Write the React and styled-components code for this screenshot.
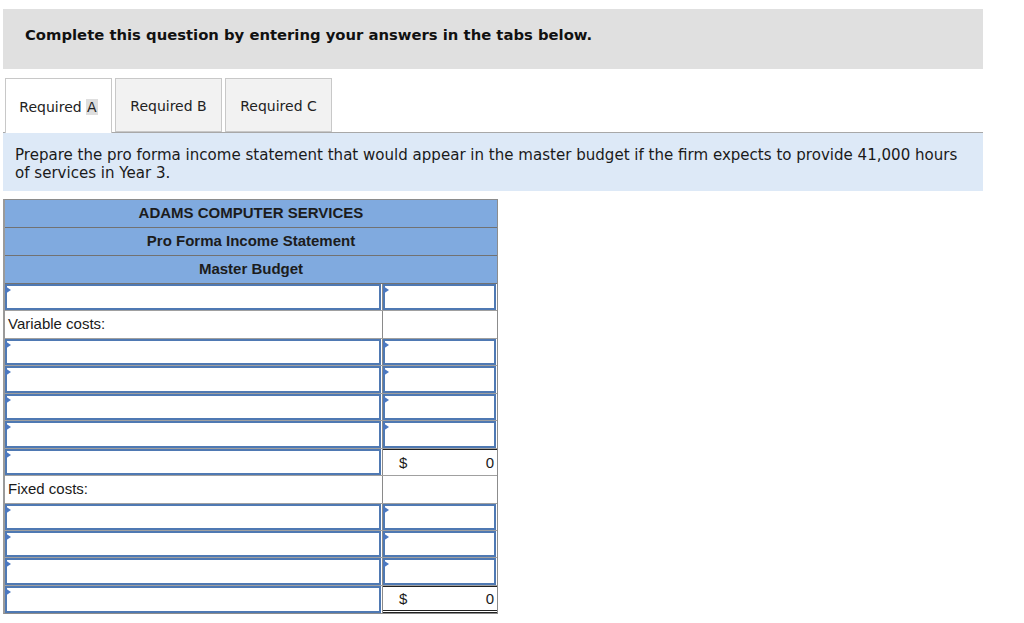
import React from "react";
import styled, {createGlobalStyle} from "styled-components";

const GlobalStyle = createGlobalStyle`
  body {
    margin: 0;
    background: #fff;
    font-family: "DejaVu Sans", Verdana, sans-serif;
    color: #1a1a1a;
  }
`;

const Page = styled.div`
  width: 980px;
  padding: 9px 0 0 3px;
`;

const Banner = styled.div`
  height: 60px;
  box-sizing: border-box;
  background: #e0e0e0;
  padding: 17px 22px 0;
  font-size: 14.8px;
  font-weight: bold;
  color: #111;
`;

const TabStrip = styled.div`
  margin-top: 9px;
  display: flex;
  gap: 3px;
  padding-left: 2px;
  height: 54px;
  border-bottom: 1px solid #a8a8a8;
`;

const Tab = styled.div`
  width: 107px;
  box-sizing: border-box;
  height: ${props => (props.active ? "55px" : "54px")};
  border: 1px solid #c8c8c8;
  border-bottom: ${props => (props.active ? "none" : "1px solid #c8c8c8")};
  background: ${props => (props.active ? "#fff" : "#f2f2f2")};
  display: flex;
  align-items: center;
  justify-content: center;
  font-size: 14px;
  color: #222;
  position: relative;
  z-index: 1;
  padding-top: 2px;
`;

const Mark = styled.span`
  background: #dedede;
  padding: 0 1px;
`;

const Prompt = styled.div`
  background: #dde9f7;
  height: 58px;
  box-sizing: border-box;
  padding: 13px 12px 0;
  font-size: 15.05px;
  line-height: 18px;
  color: #1a1a1a;
`;

const Sheet = styled.div`
  margin-top: 8px;
  width: 495px;
  box-sizing: border-box;
  border: 1px solid #8c8c8c;
  border-left: 2px solid #9a9a9a;
  font-family: "Liberation Sans", Arial, sans-serif;
  font-size: 15px;
  color: #1a1a1a;
`;

const HeadRow = styled.div`
  background: #80aadf;
  border-bottom: 1px solid #727272;
  display: flex;
  align-items: center;
  justify-content: center;
  font-weight: bold;
  color: #1c1c1c;
  padding-bottom: 2px;
  box-sizing: border-box;
  height: 28px;
`;

const Row = styled.div`
  display: grid;
  grid-template-columns: 378px 1fr;
  height: 27.45px;
  border-bottom: 1px solid #a0a0a0;
  box-sizing: border-box;
  &:last-child {
    border-bottom: none;
  }
`;

const Cell = styled.div`
  position: relative;
  box-sizing: border-box;
  border-right: ${props => (props.first ? "1px solid #8a8a8a" : "none")};
  border-top: ${props => (props.total ? "1px solid #222" : "none")};
  border-bottom: ${props => (props.double ? "3px double #222" : "none")};
  display: flex;
  align-items: center;
  padding: ${props => (props.label ? "0 3px 2px" : "0")};
`;

const Field = styled.div`
  position: absolute;
  inset: 0 1px 0 0;
  border: 2px solid #4f79b3;
  background: #fff;
  &::before {
    content: "";
    position: absolute;
    left: -2px;
    top: 0;
    border-top: 4px solid transparent;
    border-bottom: 4px solid transparent;
    border-left: 6px solid #4b78c0;
  }
`;

const Money = styled.div`
  flex: 1;
  display: flex;
  justify-content: space-between;
  padding: 0 3px 0 16px;
`;

const InputRow = () => (
  <Row>
    <Cell first><Field /></Cell>
    <Cell><Field /></Cell>
  </Row>
);

const LabelRow = ({text}) => (
  <Row>
    <Cell first label>{text}</Cell>
    <Cell />
  </Row>
);

const TotalRow = ({double}) => (
  <Row>
    <Cell first><Field /></Cell>
    <Cell total double={double}>
      <Money><span>$</span><span>0</span></Money>
    </Cell>
  </Row>
);

export default function App() {
  return (
    <Page>
      <GlobalStyle />
      <Banner>Complete this question by entering your answers in the tabs below.</Banner>
      <TabStrip>
        <Tab active>Required&nbsp;<Mark>A</Mark></Tab>
        <Tab>Required B</Tab>
        <Tab>Required C</Tab>
      </TabStrip>
      <Prompt>
        Prepare the pro forma income statement that would appear in the master budget if the firm expects to provide 41,000 hours of services in Year 3.
      </Prompt>
      <Sheet>
        <HeadRow>ADAMS COMPUTER SERVICES</HeadRow>
        <HeadRow>Pro Forma Income Statement</HeadRow>
        <HeadRow>Master Budget</HeadRow>
        <InputRow />
        <LabelRow text="Variable costs:" />
        <InputRow />
        <InputRow />
        <InputRow />
        <InputRow />
        <TotalRow />
        <LabelRow text="Fixed costs:" />
        <InputRow />
        <InputRow />
        <InputRow />
        <TotalRow double />
      </Sheet>
    </Page>
  );
}
